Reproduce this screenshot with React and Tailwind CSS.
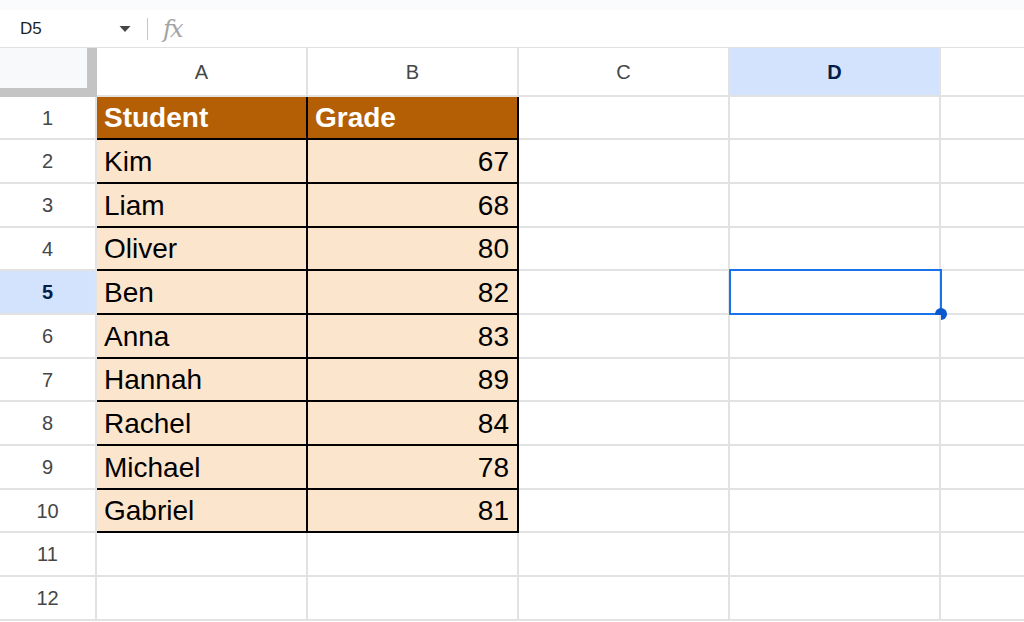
import React from 'react';

const rowHeights = ['h-[43px]', 'h-[44px]', 'h-[44px]', 'h-[43px]', 'h-[44px]', 'h-[44px]', 'h-[43px]', 'h-[44px]', 'h-[44px]', 'h-[43px]', 'h-[44px]', 'h-[44px]'];

const grades = [
  ['Kim', 67],
  ['Liam', 68],
  ['Oliver', 80],
  ['Ben', 82],
  ['Anna', 83],
  ['Hannah', 89],
  ['Rachel', 84],
  ['Michael', 78],
  ['Gabriel', 81],
];

const cols = ['A', 'B', 'C', 'D'];

const Cell = ({ children, kind, right, selected }) => {
  let cls = 'w-[211px] shrink-0 h-full flex items-center pl-[7px] pr-[8px] pt-[1px] border-r-2 border-b-2 text-[28px] leading-none ';
  if (kind === 'head') cls += 'bg-[#b45f06] border-black text-white font-bold ';
  else if (kind === 'data') cls += 'bg-[#fce5cd] border-black text-black ';
  else cls += 'bg-white border-[#e2e2e2] ';
  if (right) cls += 'justify-end ';
  return (
    <div className={cls + 'relative'}>
      {children}
      {selected && (
        <div className="absolute -left-[1px] -top-[2px] w-[213px] h-[46px] border-2 border-[#1a73e8]">
          <div className="absolute -right-[7px] -bottom-[7px] w-[12px] h-[12px] rounded-full bg-[#0b57d0]"></div>
        </div>
      )}
    </div>
  );
};

const App = () => {
  return (
    <div className="w-[1024px] h-[622px] overflow-hidden bg-white" style={{ fontFamily: '"Liberation Sans", Arial, sans-serif' }}>
      {/* top strip */}
      <div className="h-[10px] bg-[#f9fbfd]"></div>

      {/* formula bar */}
      <div className="h-[38px] flex items-center border-b border-[#e1e1e1]">
        <div className="w-[20px]"></div>
        <span className="text-[17px] text-[#1f1f1f] w-[99px]">D5</span>
        <svg width="12" height="8" viewBox="0 0 12 8" className="mt-[1px]">
          <path d="M0.5 1h11L6 7z" fill="#444746" />
        </svg>
        <div className="w-px h-[22px] bg-[#c7c7c7] ml-[16px]"></div>
        <span className="ml-[15px] text-[24px] leading-none italic text-[#a4a4a4] tracking-[-2px]" style={{ fontFamily: '"DejaVu Serif", serif' }}>fx</span>
      </div>

      {/* column headers */}
      <div className="flex h-[49px]">
        <div className="w-[97px] shrink-0 h-full bg-[#f8f9fa] border-r-[10px] border-b-[9px] border-[#c4c4c4]"></div>
        {cols.map((c) => (
          <div
            key={c}
            className={
              c === 'D'
                ? 'w-[211px] shrink-0 h-full flex items-center justify-center border-r-2 border-b-2 border-[#e2e2e2] bg-[#d3e3fd] text-[#041e49] font-bold text-[20px]'
                : 'w-[211px] shrink-0 h-full flex items-center justify-center border-r-2 border-b-2 border-[#e2e2e2] bg-white text-[#444746] text-[20px]'
            }
          >
            {c}
          </div>
        ))}
        <div className="flex-1 h-full border-b-2 border-[#e2e2e2]"></div>
      </div>

      {/* rows */}
      {rowHeights.map((h, i) => {
        const n = i + 1;
        const sel = n === 5;
        let a = null;
        let b = null;
        let kind = 'empty';
        if (n === 1) {
          a = 'Student';
          b = 'Grade';
          kind = 'head';
        } else if (n <= 10) {
          a = grades[n - 2][0];
          b = grades[n - 2][1];
          kind = 'data';
        }
        return (
          <div key={n} className={'flex ' + h}>
            <div
              className={
                sel
                  ? 'w-[97px] shrink-0 h-full flex items-center justify-center border-r-2 border-b-2 border-[#e2e2e2] bg-[#d3e3fd] text-[#041e49] font-bold text-[20px]'
                  : 'w-[97px] shrink-0 h-full flex items-center justify-center border-r-2 border-b-2 border-[#e2e2e2] bg-white text-[#444746] text-[20px]'
              }
            >
              {n}
            </div>
            <Cell kind={kind}>{a}</Cell>
            <Cell kind={kind} right={kind === 'data'}>{b}</Cell>
            <Cell kind="empty" />
            <Cell kind="empty" selected={sel} />
            <div className="flex-1 h-full border-b-2 border-[#e2e2e2]"></div>
          </div>
        );
      })}
    </div>
  );
};

export default App;
